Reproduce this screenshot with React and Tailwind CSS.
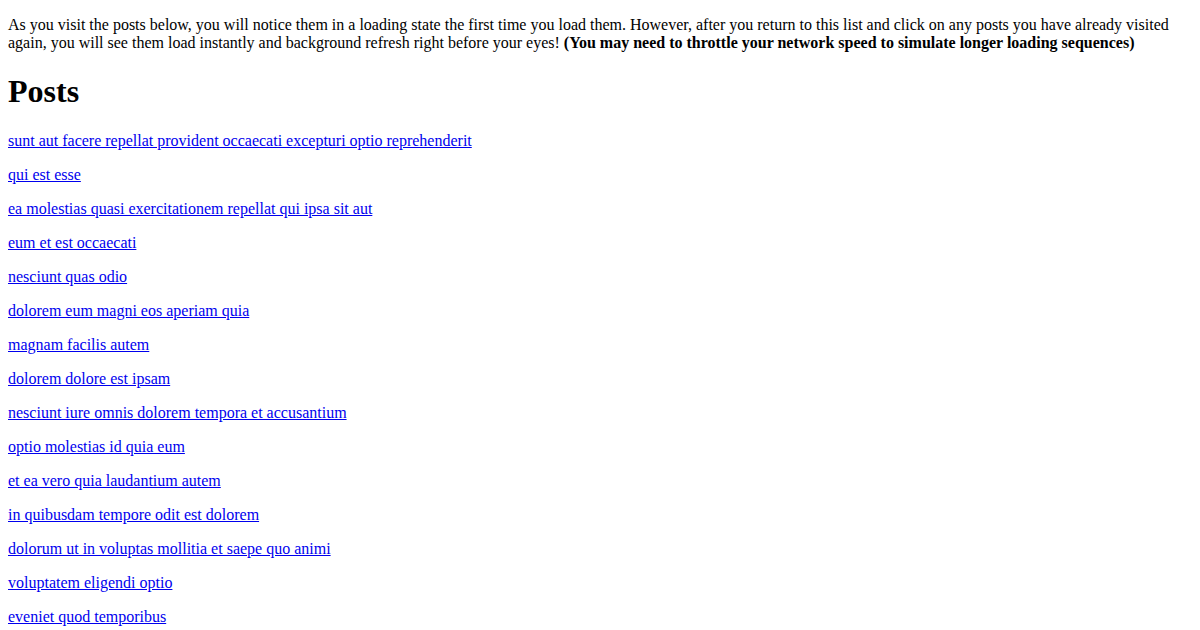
const posts = [
  'sunt aut facere repellat provident occaecati excepturi optio reprehenderit',
  'qui est esse',
  'ea molestias quasi exercitationem repellat qui ipsa sit aut',
  'eum et est occaecati',
  'nesciunt quas odio',
  'dolorem eum magni eos aperiam quia',
  'magnam facilis autem',
  'dolorem dolore est ipsam',
  'nesciunt iure omnis dolorem tempora et accusantium',
  'optio molestias id quia eum',
  'et ea vero quia laudantium autem',
  'in quibusdam tempore odit est dolorem',
  'dolorum ut in voluptas mollitia et saepe quo animi',
  'voluptatem eligendi optio',
  'eveniet quod temporibus',
  'sint suscipit perspiciatis velit dolorum rerum ipsa laboriosam odio',
  'fugit voluptas sed molestias voluptatem provident',
  'voluptate et itaque vero tempora molestiae',
];

export default function App() {
  return (
    <div className="px-2 pt-4 pb-2 bg-white text-black text-[16px] leading-[normal] font-['Liberation_Serif',serif]">
      <p className="mb-4">
        As you visit the posts below, you will notice them in a loading state the first time you load them.
        However, after you return to this list and click on any posts you have already visited again, you will
        see them load instantly and background refresh right before your eyes!{' '}
        <strong className="font-bold">
          (You may need to throttle your network speed to simulate longer loading sequences)
        </strong>
      </p>
      <h1 className="text-[32px] font-bold leading-[normal] my-[21.44px]">Posts</h1>
      <div>
        {posts.map((title, i) => (
          <p key={i} className="my-4">
            <a href="#" className="text-[#0000ee] underline">
              {title}
            </a>
          </p>
        ))}
      </div>
    </div>
  );
}
